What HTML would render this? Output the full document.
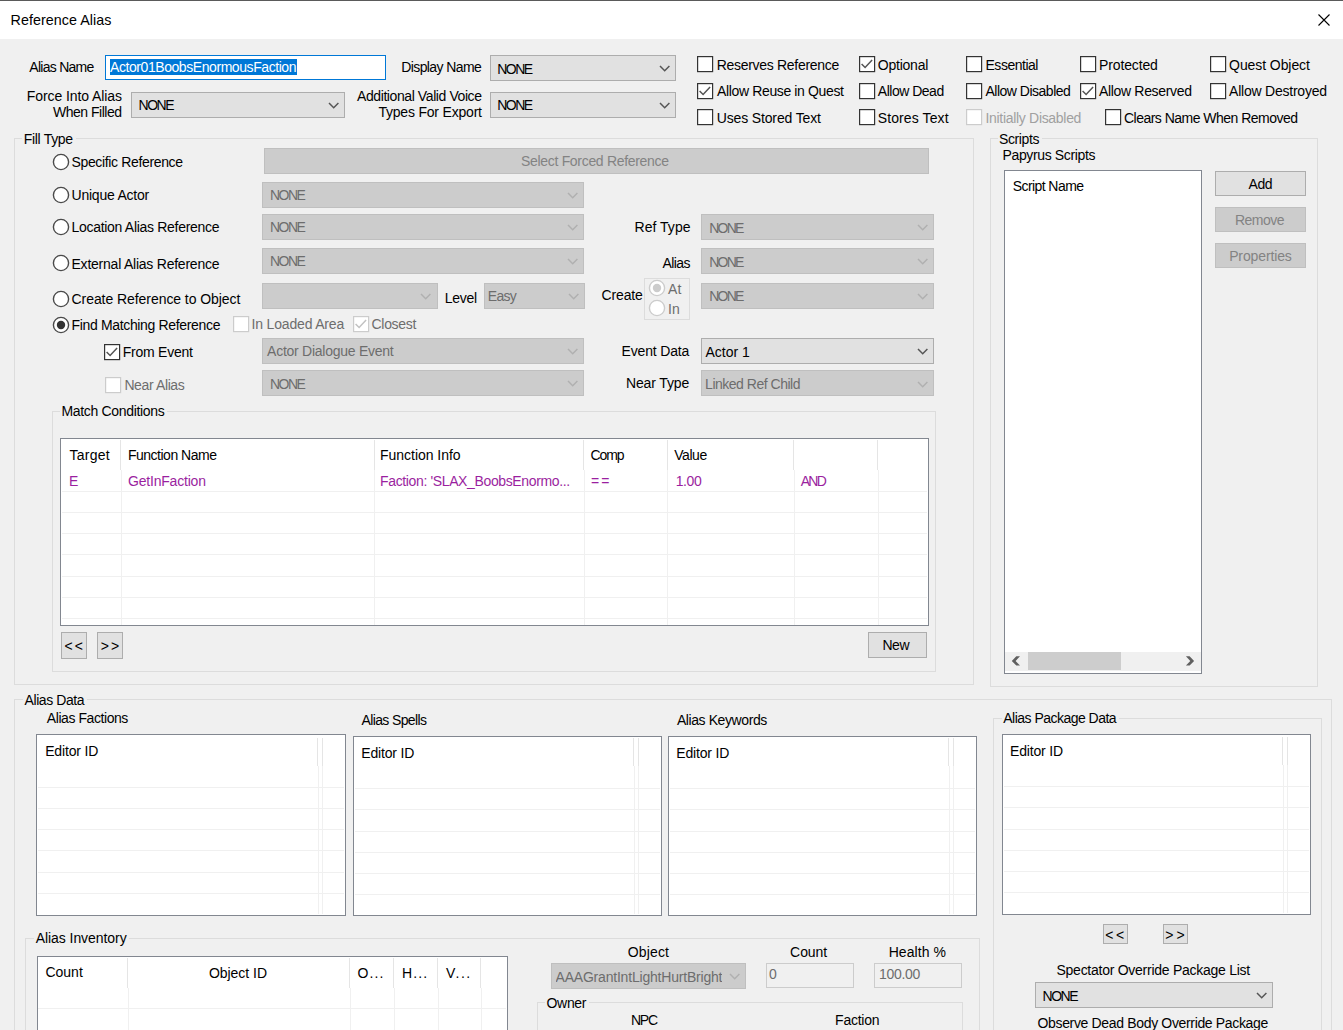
<!DOCTYPE html>
<html><head><meta charset="utf-8"><title>Reference Alias</title>
<style>
html,body{margin:0;padding:0}
body{width:1343px;height:1030px;overflow:hidden;background:#f0f0f0;position:relative;font-family:"Liberation Sans",sans-serif;font-size:14px;line-height:16px;color:#000}
.t{position:absolute;white-space:nowrap;line-height:16px}
.b{position:absolute;border:1px solid #adadad;box-sizing:content-box}
.f{position:absolute}
.s{position:absolute;overflow:visible}
</style></head><body>
<div class="f" style="left:0px;top:0px;width:1343px;height:1px;background:#5a5a5a"></div>
<div class="f" style="left:0px;top:1px;width:1343px;height:38px;background:#ffffff"></div>
<div class="t" style="left:10.5px;top:12px;color:#000;font-size:14.3px;letter-spacing:0.06px">Reference Alias</div>
<svg class="s" style="left:1318px;top:14px" width="12" height="12"><path d="M0.5 0.5 L11.5 11.5 M11.5 0.5 L0.5 11.5" stroke="#000" stroke-width="1.1"/></svg>
<div class="t" style="left:29.3px;top:59px;color:#000;letter-spacing:-0.73px">Alias Name</div>
<div class="b" style="left:105px;top:55px;width:279px;height:23px;border-color:#0078d7;background:#fff"></div>
<div class="f" style="left:110px;top:59px;width:187px;height:16px;background:#0078d7"></div>
<div class="t" style="left:110px;top:59px;color:#fff;letter-spacing:-0.43px">Actor01BoobsEnormousFaction</div>
<div class="t" style="left:401.2px;top:59px;color:#000;letter-spacing:-0.59px">Display Name</div>
<div class="b" style="left:490px;top:55px;width:184px;height:24px;border-color:#adadad;background:#e1e1e1"></div>
<div class="t" style="left:497.2px;top:61px;color:#000;letter-spacing:-1.48px">NONE</div>
<svg class="s" style="left:657.8px;top:64.05px" width="14" height="10"><path d="M2 2 L6.7 6.7 L11.4 2" fill="none" stroke="#555" stroke-width="1.5"/></svg>
<div class="t" style="left:26.8px;top:88px;color:#000;letter-spacing:-0.09px">Force Into Alias</div>
<div class="t" style="left:53px;top:104px;color:#000;letter-spacing:-0.49px">When Filled</div>
<div class="b" style="left:131px;top:92px;width:212px;height:24px;border-color:#adadad;background:#e1e1e1"></div>
<div class="t" style="left:138.5px;top:97px;color:#000;letter-spacing:-1.48px">NONE</div>
<svg class="s" style="left:326.8px;top:101.05px" width="14" height="10"><path d="M2 2 L6.7 6.7 L11.4 2" fill="none" stroke="#555" stroke-width="1.5"/></svg>
<div class="t" style="left:357px;top:88px;color:#000;letter-spacing:-0.41px">Additional Valid Voice</div>
<div class="t" style="left:378.4px;top:104px;color:#000;letter-spacing:-0.2px">Types For Export</div>
<div class="b" style="left:490px;top:92px;width:184px;height:24px;border-color:#adadad;background:#e1e1e1"></div>
<div class="t" style="left:497.2px;top:97px;color:#000;letter-spacing:-1.48px">NONE</div>
<svg class="s" style="left:657.8px;top:101.05px" width="14" height="10"><path d="M2 2 L6.7 6.7 L11.4 2" fill="none" stroke="#555" stroke-width="1.5"/></svg>
<svg class="s" style="left:697.4px;top:56.4px" width="17" height="17"><rect x="0.6" y="0.6" width="15" height="15" fill="#fff" stroke="#333" stroke-width="1.2"/></svg>
<div class="t" style="left:716.7px;top:57px;color:#000;letter-spacing:-0.3px">Reserves Reference</div>
<svg class="s" style="left:697.4px;top:82.9px" width="17" height="17"><rect x="0.6" y="0.6" width="15" height="15" fill="#fff" stroke="#333" stroke-width="1.2"/><path d="M2.6 8 L6.1 11.5 L13.1 4.1" fill="none" stroke="#555" stroke-width="1.5"/></svg>
<div class="t" style="left:717.1px;top:83px;color:#000;letter-spacing:-0.37px">Allow Reuse in Quest</div>
<svg class="s" style="left:697.4px;top:109.2px" width="17" height="17"><rect x="0.6" y="0.6" width="15" height="15" fill="#fff" stroke="#333" stroke-width="1.2"/></svg>
<div class="t" style="left:716.7px;top:110px;color:#000;letter-spacing:-0.14px">Uses Stored Text</div>
<svg class="s" style="left:858.9px;top:56.4px" width="17" height="17"><rect x="0.6" y="0.6" width="15" height="15" fill="#fff" stroke="#333" stroke-width="1.2"/><path d="M2.6 8 L6.1 11.5 L13.1 4.1" fill="none" stroke="#555" stroke-width="1.5"/></svg>
<div class="t" style="left:877.8px;top:57px;color:#000;letter-spacing:-0.23px">Optional</div>
<svg class="s" style="left:858.9px;top:82.9px" width="17" height="17"><rect x="0.6" y="0.6" width="15" height="15" fill="#fff" stroke="#333" stroke-width="1.2"/></svg>
<div class="t" style="left:877.8px;top:83px;color:#000;letter-spacing:-0.49px">Allow Dead</div>
<svg class="s" style="left:858.9px;top:109.2px" width="17" height="17"><rect x="0.6" y="0.6" width="15" height="15" fill="#fff" stroke="#333" stroke-width="1.2"/></svg>
<div class="t" style="left:877.8px;top:110px;color:#000;letter-spacing:0.1px">Stores Text</div>
<svg class="s" style="left:966.3px;top:56.4px" width="17" height="17"><rect x="0.6" y="0.6" width="15" height="15" fill="#fff" stroke="#333" stroke-width="1.2"/></svg>
<div class="t" style="left:985.5px;top:57px;color:#000;letter-spacing:-0.48px">Essential</div>
<svg class="s" style="left:966.3px;top:82.9px" width="17" height="17"><rect x="0.6" y="0.6" width="15" height="15" fill="#fff" stroke="#333" stroke-width="1.2"/></svg>
<div class="t" style="left:985.5px;top:83px;color:#000;letter-spacing:-0.5px">Allow Disabled</div>
<svg class="s" style="left:966.3px;top:109.2px" width="17" height="17"><rect x="0.6" y="0.6" width="15" height="15" fill="#fff" stroke="#cccccc" stroke-width="1.2"/></svg>
<div class="t" style="left:985.5px;top:110px;color:#a0a0a0;letter-spacing:-0.31px">Initially Disabled</div>
<svg class="s" style="left:1079.9px;top:56.4px" width="17" height="17"><rect x="0.6" y="0.6" width="15" height="15" fill="#fff" stroke="#333" stroke-width="1.2"/></svg>
<div class="t" style="left:1099px;top:57px;color:#000;letter-spacing:-0.13px">Protected</div>
<svg class="s" style="left:1079.9px;top:82.9px" width="17" height="17"><rect x="0.6" y="0.6" width="15" height="15" fill="#fff" stroke="#333" stroke-width="1.2"/><path d="M2.6 8 L6.1 11.5 L13.1 4.1" fill="none" stroke="#555" stroke-width="1.5"/></svg>
<div class="t" style="left:1099px;top:83px;color:#000;letter-spacing:-0.33px">Allow Reserved</div>
<svg class="s" style="left:1104.9px;top:109.2px" width="17" height="17"><rect x="0.6" y="0.6" width="15" height="15" fill="#fff" stroke="#333" stroke-width="1.2"/></svg>
<div class="t" style="left:1124px;top:110px;color:#000;letter-spacing:-0.52px">Clears Name When Removed</div>
<svg class="s" style="left:1209.9px;top:56.4px" width="17" height="17"><rect x="0.6" y="0.6" width="15" height="15" fill="#fff" stroke="#333" stroke-width="1.2"/></svg>
<div class="t" style="left:1229.1px;top:57px;color:#000;letter-spacing:-0.08px">Quest Object</div>
<svg class="s" style="left:1209.9px;top:82.9px" width="17" height="17"><rect x="0.6" y="0.6" width="15" height="15" fill="#fff" stroke="#333" stroke-width="1.2"/></svg>
<div class="t" style="left:1229.1px;top:83px;color:#000;letter-spacing:-0.23px">Allow Destroyed</div>
<div class="b" style="left:14px;top:138px;width:958px;height:545px;border-color:#dcdcdc;background:transparent"></div>
<div class="f" style="left:22px;top:137px;width:54px;height:3px;background:#f0f0f0"></div>
<div class="t" style="left:23.7px;top:131px;color:#000;letter-spacing:-0.31px">Fill Type</div>
<svg class="s" style="left:51.5px;top:153.2px" width="18" height="18"><circle cx="9" cy="9" r="7.6" fill="#fff" stroke="#4a4a4a" stroke-width="1.4"/></svg>
<div class="t" style="left:71.5px;top:154px;color:#000;letter-spacing:-0.35px">Specific Reference</div>
<svg class="s" style="left:51.5px;top:185.7px" width="18" height="18"><circle cx="9" cy="9" r="7.6" fill="#fff" stroke="#4a4a4a" stroke-width="1.4"/></svg>
<div class="t" style="left:71.5px;top:187px;color:#000;letter-spacing:-0.22px">Unique Actor</div>
<svg class="s" style="left:51.5px;top:218px" width="18" height="18"><circle cx="9" cy="9" r="7.6" fill="#fff" stroke="#4a4a4a" stroke-width="1.4"/></svg>
<div class="t" style="left:71.5px;top:219px;color:#000;letter-spacing:-0.3px">Location Alias Reference</div>
<svg class="s" style="left:51.5px;top:254.4px" width="18" height="18"><circle cx="9" cy="9" r="7.6" fill="#fff" stroke="#4a4a4a" stroke-width="1.4"/></svg>
<div class="t" style="left:71.5px;top:256px;color:#000;letter-spacing:-0.23px">External Alias Reference</div>
<svg class="s" style="left:51.5px;top:289.5px" width="18" height="18"><circle cx="9" cy="9" r="7.6" fill="#fff" stroke="#4a4a4a" stroke-width="1.4"/></svg>
<div class="t" style="left:71.5px;top:291px;color:#000;letter-spacing:-0.06px">Create Reference to Object</div>
<svg class="s" style="left:51.5px;top:315.5px" width="18" height="18"><circle cx="9" cy="9" r="7.6" fill="#fff" stroke="#4a4a4a" stroke-width="1.4"/><circle cx="9" cy="9" r="4.2" fill="#333"/></svg>
<div class="t" style="left:71.5px;top:317px;color:#000;letter-spacing:-0.34px">Find Matching Reference</div>
<div class="b" style="left:264px;top:148px;width:663px;height:24px;border-color:#bfbfbf;background:#cccccc"></div>
<div class="t" style="left:521px;top:153px;color:#838383;letter-spacing:-0.31px">Select Forced Reference</div>
<div class="b" style="left:262px;top:182px;width:320px;height:24px;border-color:#bfbfbf;background:#cccccc"></div>
<div class="t" style="left:269.9px;top:187px;color:#6d6d6d;letter-spacing:-1.48px">NONE</div>
<svg class="s" style="left:565.8px;top:191.05px" width="14" height="10"><path d="M2 2 L6.7 6.7 L11.4 2" fill="none" stroke="#b0b0b0" stroke-width="1.5"/></svg>
<div class="b" style="left:262px;top:214px;width:320px;height:24px;border-color:#bfbfbf;background:#cccccc"></div>
<div class="t" style="left:269.9px;top:219px;color:#6d6d6d;letter-spacing:-1.48px">NONE</div>
<svg class="s" style="left:565.8px;top:223.05px" width="14" height="10"><path d="M2 2 L6.7 6.7 L11.4 2" fill="none" stroke="#b0b0b0" stroke-width="1.5"/></svg>
<div class="b" style="left:262px;top:248px;width:320px;height:24px;border-color:#bfbfbf;background:#cccccc"></div>
<div class="t" style="left:269.9px;top:253px;color:#6d6d6d;letter-spacing:-1.48px">NONE</div>
<svg class="s" style="left:565.8px;top:257.05px" width="14" height="10"><path d="M2 2 L6.7 6.7 L11.4 2" fill="none" stroke="#b0b0b0" stroke-width="1.5"/></svg>
<div class="b" style="left:262px;top:283px;width:174px;height:24px;border-color:#bfbfbf;background:#cccccc"></div>
<svg class="s" style="left:419.3px;top:292.05px" width="14" height="10"><path d="M2 2 L6.7 6.7 L11.4 2" fill="none" stroke="#b0b0b0" stroke-width="1.5"/></svg>
<div class="t" style="left:444.8px;top:290px;color:#000;letter-spacing:-0.27px">Level</div>
<div class="b" style="left:484px;top:283px;width:99px;height:24px;border-color:#bfbfbf;background:#cccccc"></div>
<div class="t" style="left:487.8px;top:288px;color:#6d6d6d;letter-spacing:-0.71px">Easy</div>
<svg class="s" style="left:566.8px;top:292.05px" width="14" height="10"><path d="M2 2 L6.7 6.7 L11.4 2" fill="none" stroke="#b0b0b0" stroke-width="1.5"/></svg>
<div class="t" style="left:601.5px;top:287px;color:#000;letter-spacing:-0.14px">Create</div>
<div class="b" style="left:644px;top:278px;width:44px;height:40px;border-color:#dcdcdc;background:transparent"></div>
<svg class="s" style="left:647.9px;top:279px" width="18" height="18"><circle cx="9" cy="9" r="7.6" fill="#fff" stroke="#cccccc" stroke-width="1.4"/><circle cx="9" cy="9" r="4.2" fill="#cccccc"/></svg>
<svg class="s" style="left:647.9px;top:299.2px" width="18" height="18"><circle cx="9" cy="9" r="7.6" fill="#fff" stroke="#cccccc" stroke-width="1.4"/></svg>
<div class="t" style="left:668.1px;top:281px;color:#6d6d6d">At</div>
<div class="t" style="left:668.1px;top:301px;color:#6d6d6d">In</div>
<div class="t" style="left:634.5px;top:219px;color:#000;letter-spacing:0.03px">Ref Type</div>
<div class="b" style="left:701px;top:214px;width:231px;height:24px;border-color:#bfbfbf;background:#cccccc"></div>
<div class="t" style="left:709.2px;top:220px;color:#6d6d6d;letter-spacing:-1.75px">NONE</div>
<svg class="s" style="left:915.8px;top:223.05px" width="14" height="10"><path d="M2 2 L6.7 6.7 L11.4 2" fill="none" stroke="#b0b0b0" stroke-width="1.5"/></svg>
<div class="t" style="left:662.5px;top:255px;color:#000;letter-spacing:-0.59px">Alias</div>
<div class="b" style="left:701px;top:248px;width:231px;height:24px;border-color:#bfbfbf;background:#cccccc"></div>
<div class="t" style="left:709.2px;top:254px;color:#6d6d6d;letter-spacing:-1.75px">NONE</div>
<svg class="s" style="left:915.8px;top:257.05px" width="14" height="10"><path d="M2 2 L6.7 6.7 L11.4 2" fill="none" stroke="#b0b0b0" stroke-width="1.5"/></svg>
<div class="b" style="left:701px;top:283px;width:231px;height:24px;border-color:#bfbfbf;background:#cccccc"></div>
<div class="t" style="left:709.2px;top:288px;color:#6d6d6d;letter-spacing:-1.75px">NONE</div>
<svg class="s" style="left:915.8px;top:292.05px" width="14" height="10"><path d="M2 2 L6.7 6.7 L11.4 2" fill="none" stroke="#b0b0b0" stroke-width="1.5"/></svg>
<svg class="s" style="left:232.9px;top:315.6px" width="17" height="17"><rect x="0.6" y="0.6" width="15" height="15" fill="#fff" stroke="#cccccc" stroke-width="1.2"/></svg>
<div class="t" style="left:251.5px;top:316px;color:#6d6d6d;letter-spacing:-0.17px">In Loaded Area</div>
<svg class="s" style="left:352.7px;top:315.6px" width="17" height="17"><rect x="0.6" y="0.6" width="15" height="15" fill="#fff" stroke="#cccccc" stroke-width="1.2"/><path d="M2.6 8 L6.1 11.5 L13.1 4.1" fill="none" stroke="#c2c2c2" stroke-width="1.5"/></svg>
<div class="t" style="left:371.6px;top:316px;color:#6d6d6d;letter-spacing:-0.33px">Closest</div>
<svg class="s" style="left:103.9px;top:344.4px" width="17" height="17"><rect x="0.6" y="0.6" width="15" height="15" fill="#fff" stroke="#333" stroke-width="1.2"/><path d="M2.6 8 L6.1 11.5 L13.1 4.1" fill="none" stroke="#555" stroke-width="1.5"/></svg>
<div class="t" style="left:122.8px;top:344px;color:#000;letter-spacing:-0.25px">From Event</div>
<svg class="s" style="left:105.4px;top:377.4px" width="17" height="17"><rect x="0.6" y="0.6" width="15" height="15" fill="#fff" stroke="#cccccc" stroke-width="1.2"/></svg>
<div class="t" style="left:124.4px;top:377px;color:#6d6d6d;letter-spacing:-0.38px">Near Alias</div>
<div class="b" style="left:262px;top:338px;width:320px;height:24px;border-color:#bfbfbf;background:#cccccc"></div>
<div class="t" style="left:267.1px;top:343px;color:#6d6d6d;letter-spacing:-0.26px">Actor Dialogue Event</div>
<svg class="s" style="left:565.8px;top:347.05px" width="14" height="10"><path d="M2 2 L6.7 6.7 L11.4 2" fill="none" stroke="#b0b0b0" stroke-width="1.5"/></svg>
<div class="b" style="left:262px;top:370px;width:320px;height:24px;border-color:#bfbfbf;background:#cccccc"></div>
<div class="t" style="left:269.9px;top:376px;color:#6d6d6d;letter-spacing:-1.48px">NONE</div>
<svg class="s" style="left:565.8px;top:379.3px" width="14" height="10"><path d="M2 2 L6.7 6.7 L11.4 2" fill="none" stroke="#b0b0b0" stroke-width="1.5"/></svg>
<div class="t" style="left:621.5px;top:343px;color:#000;letter-spacing:-0.16px">Event Data</div>
<div class="b" style="left:701px;top:338px;width:231px;height:24px;border-color:#adadad;background:#e1e1e1"></div>
<div class="t" style="left:705.5px;top:344px;color:#000;letter-spacing:-0.03px">Actor 1</div>
<svg class="s" style="left:915.8px;top:347.05px" width="14" height="10"><path d="M2 2 L6.7 6.7 L11.4 2" fill="none" stroke="#555" stroke-width="1.5"/></svg>
<div class="t" style="left:625.9px;top:375px;color:#000;letter-spacing:-0.12px">Near Type</div>
<div class="b" style="left:701px;top:370px;width:231px;height:24px;border-color:#bfbfbf;background:#cccccc"></div>
<div class="t" style="left:705.1px;top:376px;color:#6d6d6d;letter-spacing:-0.49px">Linked Ref Child</div>
<svg class="s" style="left:915.8px;top:379.55px" width="14" height="10"><path d="M2 2 L6.7 6.7 L11.4 2" fill="none" stroke="#b0b0b0" stroke-width="1.5"/></svg>
<div class="b" style="left:52px;top:411px;width:882px;height:259px;border-color:#dcdcdc;background:transparent"></div>
<div class="f" style="left:60px;top:410px;width:107px;height:3px;background:#f0f0f0"></div>
<div class="t" style="left:61.5px;top:403px;color:#000;letter-spacing:-0.33px">Match Conditions</div>
<div class="b" style="left:60px;top:438px;width:867px;height:186px;border-color:#828790;background:#fff"></div>
<div class="f" style="left:120px;top:440px;width:1px;height:30px;background:#e5e5e5"></div>
<div class="f" style="left:374px;top:440px;width:1px;height:30px;background:#e5e5e5"></div>
<div class="f" style="left:583px;top:440px;width:1px;height:30px;background:#e5e5e5"></div>
<div class="f" style="left:667px;top:440px;width:1px;height:30px;background:#e5e5e5"></div>
<div class="f" style="left:793px;top:440px;width:1px;height:30px;background:#e5e5e5"></div>
<div class="f" style="left:877px;top:440px;width:1px;height:30px;background:#e5e5e5"></div>
<div class="f" style="left:62px;top:491px;width:865px;height:1px;background:#f0f0f0"></div>
<div class="f" style="left:62px;top:512px;width:865px;height:1px;background:#f0f0f0"></div>
<div class="f" style="left:62px;top:533px;width:865px;height:1px;background:#f0f0f0"></div>
<div class="f" style="left:62px;top:554px;width:865px;height:1px;background:#f0f0f0"></div>
<div class="f" style="left:62px;top:576px;width:865px;height:1px;background:#f0f0f0"></div>
<div class="f" style="left:62px;top:597px;width:865px;height:1px;background:#f0f0f0"></div>
<div class="f" style="left:62px;top:618px;width:865px;height:1px;background:#f0f0f0"></div>
<div class="f" style="left:121px;top:470px;width:1px;height:155px;background:#f0f0f0"></div>
<div class="f" style="left:374px;top:470px;width:1px;height:155px;background:#f0f0f0"></div>
<div class="f" style="left:584px;top:470px;width:1px;height:155px;background:#f0f0f0"></div>
<div class="f" style="left:667px;top:470px;width:1px;height:155px;background:#f0f0f0"></div>
<div class="f" style="left:794px;top:470px;width:1px;height:155px;background:#f0f0f0"></div>
<div class="f" style="left:878px;top:470px;width:1px;height:155px;background:#f0f0f0"></div>
<div class="t" style="left:69.5px;top:447px;color:#000;letter-spacing:0.26px">Target</div>
<div class="t" style="left:128px;top:447px;color:#000;letter-spacing:-0.5px">Function Name</div>
<div class="t" style="left:380.1px;top:447px;color:#000;letter-spacing:-0.04px">Function Info</div>
<div class="t" style="left:590.5px;top:447px;color:#000;letter-spacing:-1.11px">Comp</div>
<div class="t" style="left:674.2px;top:447px;color:#000;letter-spacing:-0.44px">Value</div>
<div class="t" style="left:69px;top:473px;color:#9b1fa0">E</div>
<div class="t" style="left:128px;top:473px;color:#9b1fa0;letter-spacing:-0.2px">GetInFaction</div>
<div class="t" style="left:380.1px;top:473px;color:#9b1fa0;letter-spacing:-0.37px">Faction: 'SLAX_BoobsEnormo...</div>
<div class="t" style="left:591px;top:473px;color:#9b1fa0;letter-spacing:2.15px">==</div>
<div class="t" style="left:675.7px;top:473px;color:#9b1fa0;letter-spacing:-0.42px">1.00</div>
<div class="t" style="left:800.7px;top:473px;color:#9b1fa0;letter-spacing:-1.68px">AND</div>
<div class="b" style="left:61px;top:632px;width:24px;height:25px;border-color:#adadad;background:#e1e1e1"></div>
<div class="t" style="left:64.5px;top:638px;color:#000;letter-spacing:2.15px">&lt;&lt;</div>
<div class="b" style="left:97px;top:632px;width:24px;height:25px;border-color:#adadad;background:#e1e1e1"></div>
<div class="t" style="left:100.7px;top:638px;color:#000;letter-spacing:2.15px">&gt;&gt;</div>
<div class="b" style="left:868px;top:632px;width:57px;height:24px;border-color:#adadad;background:#e1e1e1"></div>
<div class="t" style="left:882.5px;top:637px;color:#000;letter-spacing:-0.5px">New</div>
<div class="b" style="left:990px;top:138px;width:326px;height:547px;border-color:#dcdcdc;background:transparent"></div>
<div class="f" style="left:998px;top:138px;width:44px;height:2px;background:#f0f0f0"></div>
<div class="t" style="left:999px;top:131px;color:#000;letter-spacing:-0.4px">Scripts</div>
<div class="t" style="left:1002.5px;top:147px;color:#000;letter-spacing:-0.36px">Papyrus Scripts</div>
<div class="b" style="left:1004px;top:170px;width:196px;height:502px;border-color:#828790;background:#fff"></div>
<div class="t" style="left:1012.7px;top:178px;color:#000;letter-spacing:-0.57px">Script Name</div>
<div class="f" style="left:1005px;top:652px;width:196px;height:19px;background:#f0f0f0"></div>
<div class="f" style="left:1028px;top:652px;width:93px;height:18px;background:#cdcdcd"></div>
<svg class="s" style="left:1000px;top:650px" width="200" height="20"><path d="M16.3 6.3 L20 6.3 L15.6 11 L20 15.4 L16.3 15.4 L11.8 11 Z M185.9 6.3 L189.6 6.3 L194.1 11 L189.6 15.4 L185.9 15.4 L190.3 11 Z" fill="#606060"/></svg>
<div class="b" style="left:1215px;top:171px;width:89px;height:23px;border-color:#adadad;background:#e1e1e1"></div>
<div class="t" style="left:1248.5px;top:176px;color:#000;letter-spacing:-0.46px">Add</div>
<div class="b" style="left:1215px;top:207px;width:89px;height:23px;border-color:#bfbfbf;background:#cccccc"></div>
<div class="t" style="left:1234.9px;top:212px;color:#838383;letter-spacing:-0.51px">Remove</div>
<div class="b" style="left:1215px;top:243px;width:89px;height:23px;border-color:#bfbfbf;background:#cccccc"></div>
<div class="t" style="left:1229.15px;top:248px;color:#838383;letter-spacing:-0.12px">Properties</div>
<div class="b" style="left:14px;top:699px;width:1316px;height:339px;border-color:#dcdcdc;background:transparent"></div>
<div class="f" style="left:23px;top:698px;width:64px;height:3px;background:#f0f0f0"></div>
<div class="t" style="left:24.5px;top:692px;color:#000;letter-spacing:-0.41px">Alias Data</div>
<div class="t" style="left:46.8px;top:710px;color:#000;letter-spacing:-0.43px">Alias Factions</div>
<div class="b" style="left:36px;top:734px;width:308px;height:180px;border-color:#828790;background:#fff"></div>
<div class="f" style="left:317px;top:738px;width:1px;height:28px;background:#e5e5e5"></div>
<div class="f" style="left:322px;top:738px;width:1px;height:28px;background:#e5e5e5"></div>
<div class="f" style="left:318px;top:766px;width:1px;height:148px;background:#f0f0f0"></div>
<div class="f" style="left:322px;top:766px;width:1px;height:148px;background:#f0f0f0"></div>
<div class="f" style="left:38px;top:787px;width:306px;height:1px;background:#f0f0f0"></div>
<div class="f" style="left:38px;top:808px;width:306px;height:1px;background:#f0f0f0"></div>
<div class="f" style="left:38px;top:829px;width:306px;height:1px;background:#f0f0f0"></div>
<div class="f" style="left:38px;top:850px;width:306px;height:1px;background:#f0f0f0"></div>
<div class="f" style="left:38px;top:872px;width:306px;height:1px;background:#f0f0f0"></div>
<div class="f" style="left:38px;top:893px;width:306px;height:1px;background:#f0f0f0"></div>
<div class="t" style="left:45.2px;top:743px;color:#000;letter-spacing:-0.17px">Editor ID</div>
<div class="t" style="left:361.5px;top:712px;color:#000;letter-spacing:-0.63px">Alias Spells</div>
<div class="b" style="left:353px;top:736px;width:307px;height:178px;border-color:#828790;background:#fff"></div>
<div class="f" style="left:633px;top:738px;width:1px;height:28px;background:#e5e5e5"></div>
<div class="f" style="left:638px;top:738px;width:1px;height:28px;background:#e5e5e5"></div>
<div class="f" style="left:634px;top:766px;width:1px;height:148px;background:#f0f0f0"></div>
<div class="f" style="left:638px;top:766px;width:1px;height:148px;background:#f0f0f0"></div>
<div class="f" style="left:355px;top:788px;width:305px;height:1px;background:#f0f0f0"></div>
<div class="f" style="left:355px;top:809px;width:305px;height:1px;background:#f0f0f0"></div>
<div class="f" style="left:355px;top:831px;width:305px;height:1px;background:#f0f0f0"></div>
<div class="f" style="left:355px;top:852px;width:305px;height:1px;background:#f0f0f0"></div>
<div class="f" style="left:355px;top:873px;width:305px;height:1px;background:#f0f0f0"></div>
<div class="f" style="left:355px;top:894px;width:305px;height:1px;background:#f0f0f0"></div>
<div class="t" style="left:361.3px;top:745px;color:#000;letter-spacing:-0.17px">Editor ID</div>
<div class="t" style="left:676.9px;top:712px;color:#000;letter-spacing:-0.41px">Alias Keywords</div>
<div class="b" style="left:668px;top:736px;width:307px;height:178px;border-color:#828790;background:#fff"></div>
<div class="f" style="left:948px;top:738px;width:1px;height:28px;background:#e5e5e5"></div>
<div class="f" style="left:953px;top:738px;width:1px;height:28px;background:#e5e5e5"></div>
<div class="f" style="left:949px;top:766px;width:1px;height:148px;background:#f0f0f0"></div>
<div class="f" style="left:953px;top:766px;width:1px;height:148px;background:#f0f0f0"></div>
<div class="f" style="left:670px;top:788px;width:305px;height:1px;background:#f0f0f0"></div>
<div class="f" style="left:670px;top:809px;width:305px;height:1px;background:#f0f0f0"></div>
<div class="f" style="left:670px;top:831px;width:305px;height:1px;background:#f0f0f0"></div>
<div class="f" style="left:670px;top:852px;width:305px;height:1px;background:#f0f0f0"></div>
<div class="f" style="left:670px;top:873px;width:305px;height:1px;background:#f0f0f0"></div>
<div class="f" style="left:670px;top:894px;width:305px;height:1px;background:#f0f0f0"></div>
<div class="t" style="left:676.3px;top:745px;color:#000;letter-spacing:-0.17px">Editor ID</div>
<div class="b" style="left:993px;top:718px;width:327px;height:320px;border-color:#dcdcdc;background:transparent"></div>
<div class="f" style="left:1002px;top:717px;width:117px;height:3px;background:#f0f0f0"></div>
<div class="t" style="left:1003.3px;top:710px;color:#000;letter-spacing:-0.52px">Alias Package Data</div>
<div class="t" style="left:1003.3px;top:710px;color:#000"></div>
<div class="b" style="left:1002px;top:734px;width:307px;height:179px;border-color:#828790;background:#fff"></div>
<div class="f" style="left:1282px;top:737px;width:1px;height:28px;background:#e5e5e5"></div>
<div class="f" style="left:1287px;top:737px;width:1px;height:28px;background:#e5e5e5"></div>
<div class="f" style="left:1283px;top:765px;width:1px;height:148px;background:#f0f0f0"></div>
<div class="f" style="left:1287px;top:765px;width:1px;height:148px;background:#f0f0f0"></div>
<div class="f" style="left:1004px;top:786px;width:305px;height:1px;background:#f0f0f0"></div>
<div class="f" style="left:1004px;top:807px;width:305px;height:1px;background:#f0f0f0"></div>
<div class="f" style="left:1004px;top:829px;width:305px;height:1px;background:#f0f0f0"></div>
<div class="f" style="left:1004px;top:850px;width:305px;height:1px;background:#f0f0f0"></div>
<div class="f" style="left:1004px;top:871px;width:305px;height:1px;background:#f0f0f0"></div>
<div class="f" style="left:1004px;top:892px;width:305px;height:1px;background:#f0f0f0"></div>
<div class="t" style="left:1010px;top:743px;color:#000;letter-spacing:-0.17px">Editor ID</div>
<div class="b" style="left:1103px;top:924px;width:23px;height:18px;border-color:#adadad;background:#e1e1e1"></div>
<div class="t" style="left:1105.3px;top:927px;color:#000;letter-spacing:2.65px">&lt;&lt;</div>
<div class="b" style="left:1163px;top:924px;width:23px;height:18px;border-color:#adadad;background:#e1e1e1"></div>
<div class="t" style="left:1165.3px;top:927px;color:#000;letter-spacing:3.15px">&gt;&gt;</div>
<div class="t" style="left:1056.5px;top:962px;color:#000;letter-spacing:-0.26px">Spectator Override Package List</div>
<div class="b" style="left:1035px;top:982px;width:236px;height:24px;border-color:#adadad;background:#e1e1e1"></div>
<div class="t" style="left:1042.5px;top:988px;color:#000;letter-spacing:-1.48px">NONE</div>
<svg class="s" style="left:1255.1px;top:991.2px" width="14" height="10"><path d="M2 2 L6.7 6.7 L11.4 2" fill="none" stroke="#555" stroke-width="1.5"/></svg>
<div class="t" style="left:1037.5px;top:1015px;color:#000;letter-spacing:-0.34px">Observe Dead Body Override Package</div>
<div class="b" style="left:25px;top:938px;width:953px;height:100px;border-color:#dcdcdc;background:transparent"></div>
<div class="f" style="left:34px;top:936px;width:95px;height:4px;background:#f0f0f0"></div>
<div class="t" style="left:35.7px;top:930px;color:#000;letter-spacing:-0.06px">Alias Inventory</div>
<div class="b" style="left:37px;top:956px;width:469px;height:82px;border-color:#828790;background:#fff"></div>
<div class="f" style="left:127px;top:958px;width:1px;height:30px;background:#e5e5e5"></div>
<div class="f" style="left:349px;top:958px;width:1px;height:30px;background:#e5e5e5"></div>
<div class="f" style="left:393px;top:958px;width:1px;height:30px;background:#e5e5e5"></div>
<div class="f" style="left:437px;top:958px;width:1px;height:30px;background:#e5e5e5"></div>
<div class="f" style="left:480px;top:958px;width:1px;height:30px;background:#e5e5e5"></div>
<div class="f" style="left:128px;top:988px;width:1px;height:42px;background:#f0f0f0"></div>
<div class="f" style="left:350px;top:988px;width:1px;height:42px;background:#f0f0f0"></div>
<div class="f" style="left:394px;top:988px;width:1px;height:42px;background:#f0f0f0"></div>
<div class="f" style="left:438px;top:988px;width:1px;height:42px;background:#f0f0f0"></div>
<div class="f" style="left:481px;top:988px;width:1px;height:42px;background:#f0f0f0"></div>
<div class="f" style="left:38px;top:1008px;width:468px;height:1px;background:#f0f0f0"></div>
<div class="t" style="left:45.4px;top:964px;color:#000;letter-spacing:0.01px">Count</div>
<div class="t" style="left:208.9px;top:965px;color:#000;letter-spacing:-0.03px">Object ID</div>
<div class="t" style="left:357.5px;top:965px;color:#000;letter-spacing:1.15px">O...</div>
<div class="t" style="left:402.1px;top:965px;color:#000;letter-spacing:1.07px">H...</div>
<div class="t" style="left:446.1px;top:965px;color:#000;letter-spacing:1.43px">V...</div>
<div class="t" style="left:627.8px;top:944px;color:#000;letter-spacing:0.15px">Object</div>
<div class="b" style="left:551px;top:963px;width:193px;height:24px;border-color:#bfbfbf;background:#cccccc"></div>
<svg class="s" style="left:727.8px;top:972.1px" width="14" height="10"><path d="M2 2 L6.7 6.7 L11.4 2" fill="none" stroke="#b0b0b0" stroke-width="1.5"/></svg>
<div class="t" style="left:555.5px;top:969px;color:#6d6d6d;width:166px;overflow:hidden;letter-spacing:-0.2px">AAAGrantIntLightHurtBright</div>
<div class="t" style="left:790.1px;top:944px;color:#000;letter-spacing:-0.06px">Count</div>
<div class="b" style="left:766px;top:963px;width:86px;height:23px;border-color:#cccccc;background:#f0f0f0"></div>
<div class="t" style="left:769px;top:966px;color:#6d6d6d">0</div>
<div class="t" style="left:888.7px;top:944px;color:#000;letter-spacing:0.07px">Health %</div>
<div class="b" style="left:874px;top:963px;width:86px;height:23px;border-color:#cccccc;background:#f0f0f0"></div>
<div class="t" style="left:878.9px;top:966px;color:#6d6d6d;letter-spacing:-0.28px">100.00</div>
<div class="b" style="left:537px;top:1002px;width:424px;height:36px;border-color:#dcdcdc;background:transparent"></div>
<div class="f" style="left:545px;top:1002px;width:44px;height:2px;background:#f0f0f0"></div>
<div class="t" style="left:546.5px;top:995px;color:#000;letter-spacing:-0.31px">Owner</div>
<div class="t" style="left:631px;top:1012px;color:#000;letter-spacing:-1.28px">NPC</div>
<div class="t" style="left:835.1px;top:1012px;color:#000;letter-spacing:-0.25px">Faction</div>
</body></html>
